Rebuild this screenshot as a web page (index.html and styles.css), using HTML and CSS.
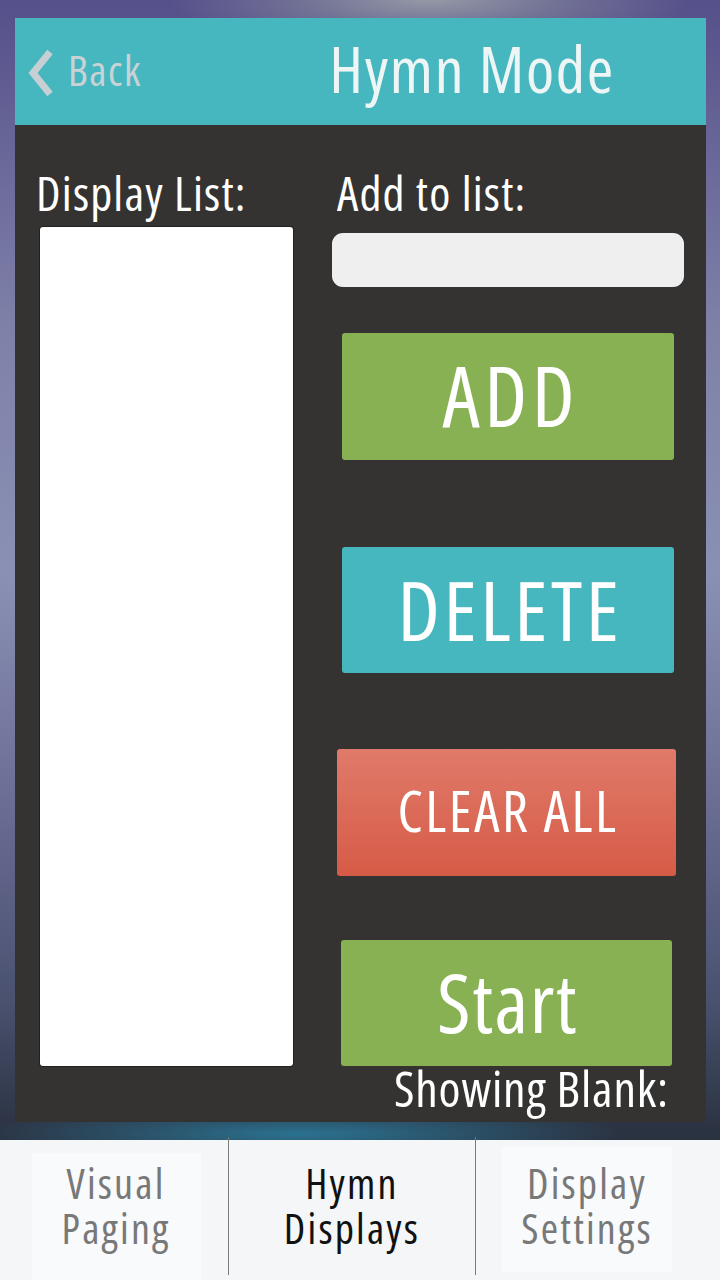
FILE: index.html
```html
<!DOCTYPE html>
<html lang="en">
<head>
<meta charset="utf-8">
<title>Hymn Mode</title>
<link rel="stylesheet" href="styles.css">
</head>
<body>
<div class="screen">
  <div class="panel">
    <header class="nav">
      <div class="back">
        <svg class="chev" width="28" height="48" viewBox="0 0 28 48"><path d="M23 3 L6 24 L23 45" fill="none" stroke="#c6cfd4" stroke-width="7"/></svg>
        <span class="back-text">Back</span>
      </div>
      <h1 class="title">Hymn Mode</h1>
    </header>
    <main class="content">
      <section class="list-col">
        <div class="label label-list">Display List:</div>
        <div class="listbox"></div>
      </section>
      <section class="ctrl-col">
        <div class="label label-add">Add to list:</div>
        <div class="input"></div>
        <div class="btn btn-add">ADD</div>
        <div class="btn btn-delete">DELETE</div>
        <div class="btn btn-clear">CLEAR ALL</div>
        <div class="btn btn-start">Start</div>
        <div class="status">Showing Blank:</div>
      </section>
    </main>
  </div>
  <nav class="tabs">
    <div class="tab tab-first"><div class="tab-box"><div class="tab-line">Visual</div><div class="tab-line">Paging</div></div></div>
    <div class="tab tab-mid tab-active"><div class="tab-box"><div class="tab-line">Hymn</div><div class="tab-line">Displays</div></div></div>
    <div class="tab tab-last"><div class="tab-box"><div class="tab-line">Display</div><div class="tab-line">Settings</div></div></div>
  </nav>
</div>
</body>
</html>
```
FILE: styles.css
```css
* { box-sizing: border-box; }
html, body { margin: 0; padding: 0; }
body {
  width: 720px;
  height: 1280px;
  overflow: hidden;
  font-family: "Open Sans", "Lato", sans-serif;
  font-stretch: 75%;
  background:
    radial-gradient(ellipse 320px 30px at 300px 1134px, #2a7290 0%, rgba(42,114,144,0.6) 40%, rgba(20,40,55,0) 100%),
    radial-gradient(ellipse 260px 50px at 430px 0px, #9599a6 0%, rgba(140,145,160,0.5) 50%, rgba(120,120,150,0) 100%),
    linear-gradient(to bottom, #56508a 0%, #7e80a8 25%, #8a90b4 45%, #6c6e96 62%, #4a5270 78%, #2c3444 88%, #18222c 100%);
}
.screen {
  width: 720px;
  height: 1280px;
  padding-top: 18px;
  display: flex;
  flex-direction: column;
}
.panel {
  margin: 0 14px 0 15px;
  height: 1104px;
  background: #353331;
  display: flex;
  flex-direction: column;
}
.nav {
  height: 107px;
  background: #47b7bf;
  display: flex;
  align-items: center;
  padding-left: 12px;
}
.back {
  display: flex;
  align-items: center;
  color: #c9d2d6;
}
.chev { display: block; margin-top: 2px; }
.back-text {
  font-size: 42px;
  letter-spacing: 1.5px;
  line-height: 1;
  margin-left: 13px;
  padding-bottom: 4px;
}
.title {
  margin: 0 91px 0 auto;
  font-weight: 400;
  font-size: 64px;
  letter-spacing: 1.7px;
  line-height: 1;
  color: #eef5f5;
  padding-bottom: 6px;
}
.content {
  flex: 1;
  display: flex;
  padding: 44px 0 0 25px;
}
.label {
  font-size: 48px;
  line-height: 48px;
  letter-spacing: 1.2px;
  color: #ffffff;
  white-space: nowrap;
}
.list-col {
  width: 253px;
}
.label-list { margin-left: -4px; }
.listbox {
  margin-top: 10px;
  width: 253px;
  height: 839px;
  background: #ffffff;
  border-radius: 3px;
  box-shadow: 0 0 0 1px rgba(0,0,0,0.35);
}
.ctrl-col {
  margin-left: 39px;
  width: 352px;
  display: flex;
  flex-direction: column;
}
.label-add { padding-left: 5px; }
.input {
  margin-top: 16px;
  height: 54px;
  background: #efefef;
  border-radius: 11px;
}
.btn {
  display: flex;
  align-items: center;
  justify-content: center;
  color: #ffffff;
  line-height: 1;
  border-radius: 3px;
  padding-bottom: 4px;
  white-space: nowrap;
}
.btn-add {
  margin: 46px 0 0 10px;
  width: 332px;
  height: 127px;
  background: #88b154;
  font-size: 84px;
  letter-spacing: 4.6px;
  padding-left: 6px;
}
.btn-delete {
  margin: 87px 0 0 10px;
  width: 332px;
  height: 126px;
  background: #47b7bf;
  font-size: 83px;
  letter-spacing: 3.6px;
  padding-left: 4px;
}
.btn-clear {
  margin: 76px 0 0 5px;
  width: 339px;
  height: 127px;
  background: linear-gradient(to bottom, #e07a6a 0%, #d65b46 100%);
  font-size: 57px;
  letter-spacing: 2.6px;
  padding-left: 3px;
}
.btn-start {
  margin: 64px 0 0 9px;
  width: 331px;
  height: 126px;
  background: #88b154;
  font-size: 82px;
  letter-spacing: 1.5px;
  padding-left: 2px;
}
.status {
  margin-top: 2px;
  padding-right: 15px;
  text-align: right;
  font-size: 50px;
  letter-spacing: 0.8px;
  line-height: 40px;
  color: #ffffff;
  white-space: nowrap;
}
.tabs {
  margin-top: 18px;
  height: 140px;
  background: #f4f6f8;
  display: grid;
  grid-template-columns: 228px 248px 244px;
}
.tab {
  display: flex;
  justify-content: center;
  font-size: 42px;
  letter-spacing: 2.2px;
  color: #787878;
  text-align: center;
}
.tab-line {
  line-height: 45px;
  height: 45px;
}
.tab-mid {
  border-left: 1px solid #7a7a7a;
  border-right: 1px solid #7a7a7a;
  margin-top: -3px;
  margin-bottom: 5px;
}
.tab-active { color: #111111; }
.tab-box {
  padding-top: 20px;
}
.tab-first .tab-box {
  margin: 13px 0 0 4px;
  width: 169px;
  padding-top: 7px;
  background: #f9fafb;
}
.tab-last .tab-box {
  margin: 7px 48px 8px 26px;
  width: 170px;
  padding-top: 13px;
  background: #f9fafb;
}
.tab-mid .tab-box { padding-top: 23px; }
```
